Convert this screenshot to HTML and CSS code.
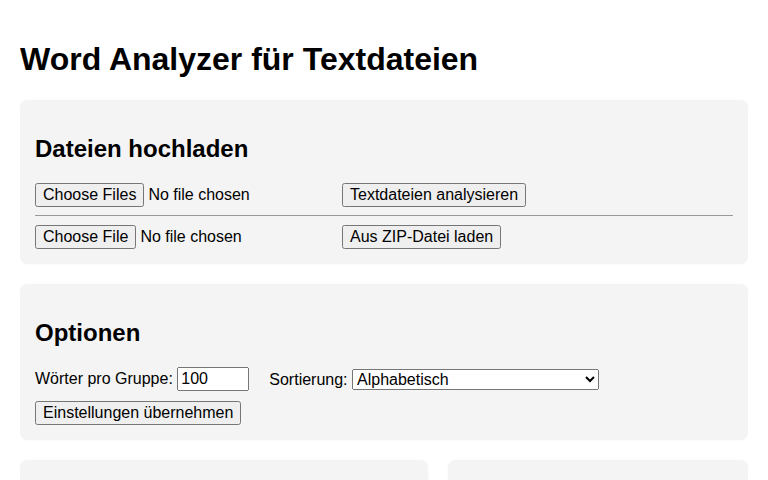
FILE: index.html
```html
<!DOCTYPE html>
<html lang="de">
<head>
<meta charset="utf-8">
<title>Word Analyzer</title>
<link rel="stylesheet" href="styles.css">
</head>
<body>
<h1>Word Analyzer für Textdateien</h1>
<section class="card">
  <h2>Dateien hochladen</h2>
  <div class="upload-row first">
    <input type="file" multiple class="file">
    <button>Textdateien analysieren</button>
  </div>
  <div class="upload-row">
    <input type="file" accept=".zip" class="file">
    <button>Aus ZIP-Datei laden</button>
  </div>
</section>
<section class="card">
  <h2>Optionen</h2>
  <div class="options-row">
    <label class="field">Wörter pro Gruppe: <input type="number" value="100" class="num"></label>
    <label class="field">Sortierung: <select class="sel"><option>Alphabetisch</option></select></label>
  </div>
  <div class="actions">
    <button>Einstellungen übernehmen</button>
  </div>
</section>
<div class="results">
  <section class="card tall"></section>
  <section class="card tall"></section>
</div>
</body>
</html>
```
FILE: styles.css
```css
body {
  margin: 20px;
  font-family: "Liberation Sans", Arial, sans-serif;
  font-size: 16px;
  color: #000;
  background: #fff;
}
h1 {
  font-size: 32px;
  margin: 21px 0 22px;
}
h2 {
  font-size: 24px;
  margin: 20px 0;
}
.card {
  background: #f4f4f4;
  border-radius: 8px;
  padding: 15px;
  margin-bottom: 20px;
  box-shadow: 0 0 3px rgba(0,0,0,0.04);
}
button, input, select {
  font-family: "Liberation Sans", Arial, sans-serif;
  font-size: 16px;
}
.upload-row {
  display: flex;
  align-items: center;
  gap: 10px;
}
.upload-row.first {
  padding-bottom: 8px;
  border-bottom: 1px solid #999;
  margin-bottom: 9px;
}
.file {
  width: 297px;
}
.options-row {
  display: flex;
  align-items: center;
  gap: 20px;
}
.num {
  width: 64px;
}
.sel {
  width: 247px;
}
.actions {
  margin-top: 10px;
}
.results {
  display: grid;
  grid-template-columns: 1fr 300px;
  gap: 20px;
}
.tall {
  height: 200px;
  margin-bottom: 0;
}
```
